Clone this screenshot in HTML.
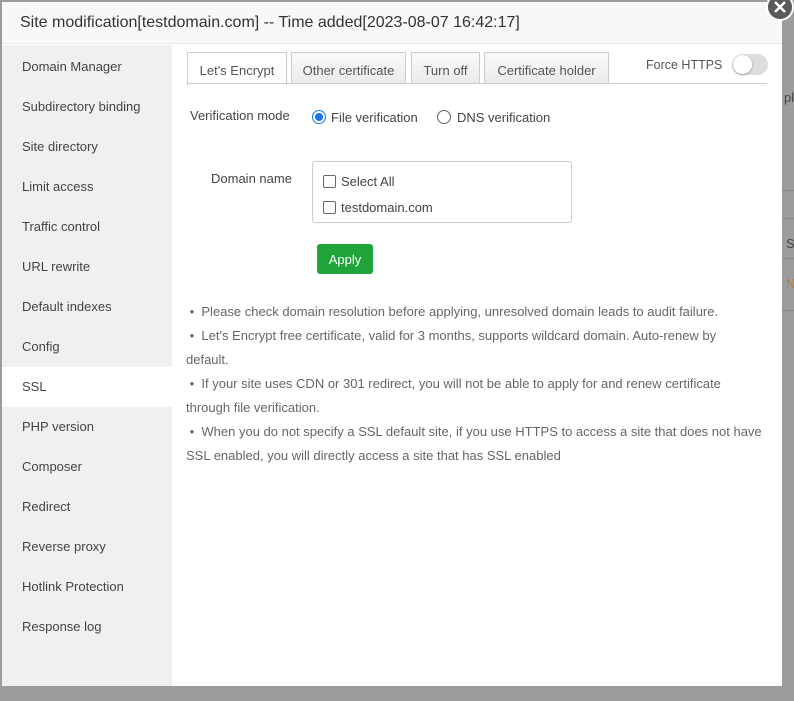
<!DOCTYPE html>
<html><head><meta charset="utf-8"><style>
*{margin:0;padding:0;box-sizing:border-box}
body{width:794px;height:701px;background:#9c9c9c;font-family:"Liberation Sans",sans-serif;position:relative;overflow:hidden;font-size:13px;color:#555}
.bgline{position:absolute;left:782px;width:12px;height:1px;background:#8a8a8a}
.modal{position:absolute;left:2px;top:2px;width:780px;height:684px;background:#fff}
.hd{height:42px;background:#f8f8f8;border-bottom:1px solid #e8e8e8;font-size:16px;color:#333;padding-left:18px;line-height:42px}
.side{position:absolute;left:0;top:43px;width:170px;bottom:0;background:#f0f0f0;padding-top:2px}
.side div{height:40px;line-height:40px;padding-left:20px;color:#444;font-size:13px}
.side .act{background:#fff}
.tab{position:absolute;top:50px;height:32px;border:1px solid #ccc;border-bottom:none;background:linear-gradient(#fafafa,#eaeaea);line-height:35px;text-align:center;color:#555;font-size:13px}
.tab.on{background:#fff;height:33px}
.uline{position:absolute;left:185px;top:81px;width:580px;height:1px;background:#ccc}
.cb{display:inline-block;width:13px;height:13px;border:1px solid #666;border-radius:2px;vertical-align:-2px;margin-right:5px}
.note{position:absolute;left:184px;top:298px;width:590px;font-size:13px;line-height:24px;color:#666;white-space:nowrap}
</style></head><body>
<div class="bgline" style="top:190px"></div><div class="bgline" style="top:218px"></div><div class="bgline" style="top:258px"></div><div class="bgline" style="top:310px"></div>
<div style="position:absolute;left:784px;top:90px;color:#444;font-size:13px">pl</div>
<div style="position:absolute;left:786px;top:236px;color:#444;font-size:13px">S</div>
<div style="position:absolute;left:786px;top:276px;color:#b08040;font-size:13px">N</div>
<div class="modal">
<div class="hd">Site modification[testdomain.com] -- Time added[2023-08-07 16:42:17]</div>
<div class="side">
<div>Domain Manager</div><div>Subdirectory binding</div><div>Site directory</div><div>Limit access</div><div>Traffic control</div><div>URL rewrite</div><div>Default indexes</div><div>Config</div><div class="act">SSL</div><div>PHP version</div><div>Composer</div><div>Redirect</div><div>Reverse proxy</div><div>Hotlink Protection</div><div>Response log</div>
</div>
<div class="tab on" style="left:185px;width:100px">Let's Encrypt</div>
<div class="tab" style="left:289px;width:115px">Other certificate</div>
<div class="tab" style="left:409px;width:69px">Turn off</div>
<div class="tab" style="left:482px;width:125px">Certificate holder</div>
<div class="uline"></div>
<div style="position:absolute;left:644px;top:56px;font-size:12.5px;color:#555">Force HTTPS</div>
<div style="position:absolute;left:730px;top:52px;width:36px;height:21px;border-radius:11px;background:#ddd"><div style="position:absolute;left:1px;top:1px;width:19px;height:19px;border-radius:50%;background:#fff;box-shadow:0 1px 2px rgba(0,0,0,.3)"></div></div>
<div style="position:absolute;left:188px;top:106px;color:#444">Verification mode</div>
<div style="position:absolute;left:310px;top:108px;width:14px;height:14px;border-radius:50%;border:1px solid #1a73e8"><div style="margin:2px;width:8px;height:8px;border-radius:50%;background:#1a73e8"></div></div>
<div style="position:absolute;left:329px;top:108px;color:#444">File verification</div>
<div style="position:absolute;left:435px;top:108px;width:14px;height:14px;border-radius:50%;border:1px solid #666"></div>
<div style="position:absolute;left:455px;top:108px;color:#444">DNS verification</div>
<div style="position:absolute;left:209px;top:169px;color:#444">Domain name</div>
<div style="position:absolute;left:310px;top:159px;width:260px;height:62px;border:1px solid #ccc;border-radius:3px;color:#444">
<div style="position:absolute;left:10px;top:12px"><span class="cb"></span>Select All</div>
<div style="position:absolute;left:10px;top:38px"><span class="cb"></span>testdomain.com</div>
</div>
<div style="position:absolute;left:315px;top:242px;width:56px;height:30px;background:#20a53a;border-radius:3px;color:#fff;font-size:13px;line-height:31px;text-align:center">Apply</div>
<div class="note">
<div>&nbsp;•&nbsp; Please check domain resolution before applying, unresolved domain leads to audit failure.</div>
<div>&nbsp;•&nbsp; Let's Encrypt free certificate, valid for 3 months, supports wildcard domain. Auto-renew by<br>default.</div>
<div>&nbsp;•&nbsp; If your site uses CDN or 301 redirect, you will not be able to apply for and renew certificate<br>through file verification.</div>
<div>&nbsp;•&nbsp; When you do not specify a SSL default site, if you use HTTPS to access a site that does not have<br>SSL enabled, you will directly access a site that has SSL enabled</div>
</div>
</div>
<div style="position:absolute;left:766px;top:-7px;width:28px;height:28px;border-radius:50%;background:#5a5a5a;border:2px solid #fff">
<svg width="24" height="24" viewBox="0 0 24 24"><path d="M7 7L17 17M17 7L7 17" stroke="#fff" stroke-width="2.5"/></svg></div>
</body></html>
